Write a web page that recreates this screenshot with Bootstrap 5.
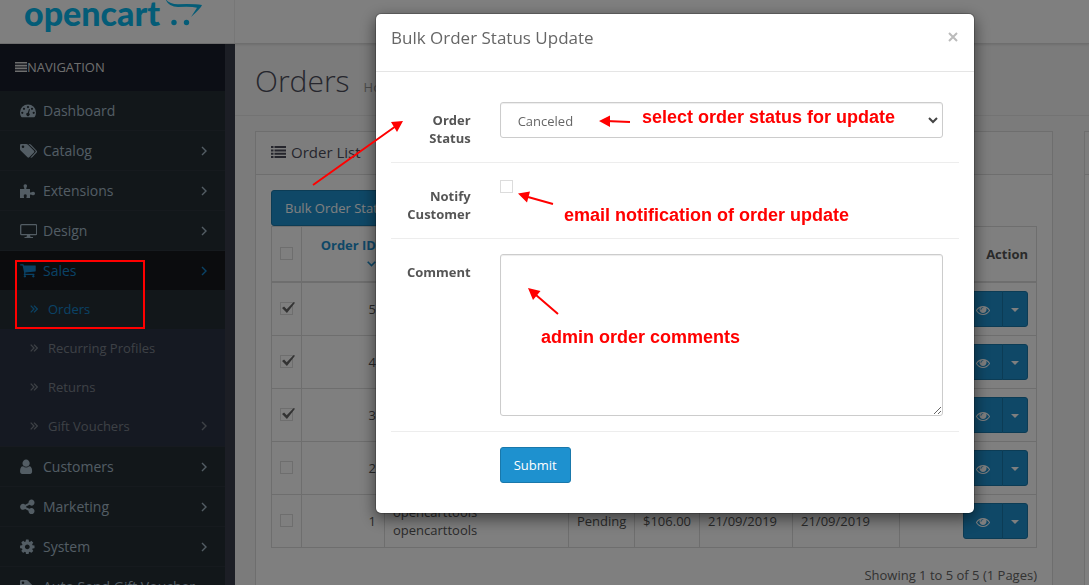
<!DOCTYPE html>
<html lang="en">
<head>
<meta charset="utf-8">
<meta name="viewport" content="width=device-width, initial-scale=1">
<title>Orders</title>
<link href="https://cdn.jsdelivr.net/npm/bootstrap@5.3.0/dist/css/bootstrap.min.css" rel="stylesheet">
<style>
  body { font: 13px/18px "Open Sans", sans-serif; color: #666; background: #f6f6f6; }
  .page { height: 100vh; overflow: hidden; }
  .topbar { height: 44px; border-bottom: 1px solid #dcdcdc; box-shadow: 0 1px 2px rgba(0,0,0,.1); z-index: 2; }
  .logo-box { width: 235px; border-right: 1px solid #eee; padding: 0 0 0 24px; }
  .logo-word { width: 136px; font: 900 34px/26px Lato, sans-serif; color: #08b9ee; }

  .sidebar { flex: 0 0 235px; background: #383d4a; }
  .side-inner { width: 225px; background: #252f35; }
  .side-title { height: 47px; background: #191d2b; color: #ddd; padding: 0 15px 2px; font-size: 13px; }
  .side-link { height: 40px; padding: 0 17px 0 20px; gap: 6px; font-size: 14px; color: #a6bac9; border-bottom: 1px solid #2c343c; text-decoration: none; }
  .side-link svg { width: 17px; height: 16px; flex: none; }
  .side-link.current { height: 39px; background: #16181d; color: #1485ca; border: 0; }
  .side-sub { background: #2b3344; border-bottom: 1px solid #2f3541; }
  .side-sub a { height: 39px; padding: 0 17px 2px 30px; gap: 10px; color: #7b828d; text-decoration: none; }
  .side-sub a.current { background: #252f35; color: #1485ca; }
  .side-sub svg, .side-link .angle, .side-sub .angle { width: 8px; height: 10px; flex: none; }
  .side-mark { left: 15px; top: 260px; width: 130px; height: 69px; border: 2px solid #f00; z-index: 1060; }

  .page-head { height: 72px; padding: 17px 20px 0; gap: 14px; border-bottom: 1px solid #e7e7e7; }
  .page-head h1 { font-size: 30px; line-height: 40px; font-weight: 300; color: #4c4d5a; margin: 0; }
  .crumb { padding-top: 17px; color: #999; text-decoration: none; }
  .panels { padding: 15px 0 0 20px; gap: 31px; }
  .panel { border: 1px solid #dcdcdc; background: #fff; }
  .panel-top { height: 43px; padding: 0 15px 2px; gap: 5px; font-size: 15px; color: #4c4d5a; background: #fafafa; border-bottom: 1px solid #dcdcdc; }
  .panel-main { padding: 15px; }
  .side-panel { flex: 0 0 245px; margin-right: -240px; }
  .btn-main { --bs-btn-bg: #1e91cf; --bs-btn-color: #fff; --bs-btn-border-color: #1978ab; --bs-btn-hover-bg: #1978ab; --bs-btn-hover-color: #fff;
    --bs-btn-font-size: 13px; --bs-btn-line-height: 18px; --bs-btn-padding-y: 8px; --bs-btn-padding-x: 13px; --bs-btn-border-radius: 3px; height: 36px; }

  .orders { table-layout: fixed; margin: 0 0 18px; --bs-table-color: #555; border-color: #dcdcdc; }
  .orders > :not(caption) > * > * { padding: 8px; vertical-align: middle; border-width: 1px; }
  .orders thead th { height: 55px; border-bottom-width: 2px; color: #555; }
  .orders tbody td { height: 53px; }
  .orders th a { color: #1e91cf; text-decoration: none; }
  .w-tick { width: 30px; } .w-id { width: 83px; } .w-status { width: 66px; } .w-total { width: 65px; }
  .w-added { width: 93px; } .w-changed { width: 107px; } .w-action { width: 137px; }
  .btn-eye { --bs-btn-padding-x: 12px; } .btn-caret { --bs-btn-padding-x: 8px; }

  .tick { appearance: none; display: block; position: relative; width: 13px; height: 13px; margin: 0; border: 1px solid #dcdcdc; background: transparent; }
  .tick:checked::before { content: ""; position: absolute; left: 1px; top: -1px; width: 13px; height: 11px; background: #666;
    clip-path: polygon(0 55%, 16% 42%, 36% 66%, 90% 0, 100% 6%, 38% 100%); }

  .shade { z-index: 1050; opacity: .5; }
  .modal-dialog { max-width: 600px; margin: 13px 114px 0 auto; }
  .modal-content { border-radius: 6px; border: 1px solid rgba(0,0,0,.2); box-shadow: 0 5px 15px rgba(0,0,0,.5); background-clip: padding-box; color: #666; }
  .modal-header { padding: 14px 15px 24px; border-bottom: 1px solid #e5e5e5; }
  .modal-title { font-size: 17px; line-height: 19px; font-weight: 400; color: #666; }
  .btn-x { border: 0; background: none; padding: 0; width: 11px; height: 18px; color: #bbb; }
  .modal-body { padding: 15px; }
  .field { padding: 15px 0; margin: 0; }
  .field + .field { border-top: 1px solid #ededed; }
  .field > * { padding: 0 16px 0 14px; }
  .field label { padding-top: 9px; padding-right: 15px; font-weight: 700; color: #555; text-align: right; }
  .field .form-control, .field .form-select { font-size: 13px; line-height: 18px; border: 1px solid #ccc; border-radius: 3px; color: #666; box-shadow: inset 0 1px 1px rgba(0,0,0,.075); }
  .field .form-select { height: 36px; padding: 9px 30px 7px 17px; background-size: 10px 8px; background-position: right 4px center;
    background-image: url("data:image/svg+xml,%3Csvg xmlns='http://www.w3.org/2000/svg' viewBox='0 0 10 8'%3E%3Cpath d='M1 2l4 4 4-4' fill='none' stroke='%23444' stroke-width='2'/%3E%3C/svg%3E"); }
  .field textarea { height: 162px; }
  .tick-form { margin-top: 2px; }
  .note { position: absolute; font: 700 18px/20px "Liberation Sans", sans-serif; color: #f00; white-space: nowrap; pointer-events: none; }
  .note-status { left: 266px; top: 93px; } .note-notify { left: 188px; top: 191px; } .note-comment { left: 165px; top: 313px; }
  .arrows { position: absolute; left: 0; top: 0; width: 300px; height: 320px; overflow: visible; pointer-events: none; }
</style>
</head>
<body>
<svg class="d-none" aria-hidden="true">
  <symbol id="angle" viewBox="0 0 8 10"><path d="M2 1l4 4-4 4" fill="none" stroke="currentColor" stroke-width="1.4"/></symbol>
  <symbol id="angles" viewBox="0 0 8 10"><path d="M.7 1.700L4 5 .7 8.300M4 1.700L7.300 5 4 8.300" fill="none" stroke="currentColor" stroke-width="1.2"/></symbol>
  <symbol id="eye" viewBox="0 0 1792 1792"><path d="M1664 960q-152-236-381-353 61 104 61 225 0 185-131.500 316.500t-316.500 131.500-316.500-131.500-131.500-316.500q0-121 61-225-229 117-381 353 133 205 333.500 326.500t434.500 121.500 434.500-121.500 333.500-326.500zm-720-384q0-20-14-34t-34-14q-125 0-214.500 89.500t-89.500 214.500q0 20 14 34t34 14 34-14 14-34q0-86 61-147t147-61q20 0 34-14t14-34zm848 384q0 34-20 69-140 230-376.500 368.500t-499.500 138.500-499.500-139-376.500-368q-20-35-20-69t20-69q140-229 376.500-368t499.500-139 499.500 139 376.500 368q20 35 20 69z" fill="currentColor"/></symbol>
  <symbol id="caret" viewBox="0 0 8 4"><path d="M0 0h8L4 4z" fill="currentColor"/></symbol>
  <symbol id="tag" viewBox="0 0 17 16"><path fill-rule="evenodd" d="M0 2.200Q0 1 1.200 1h5q1 0 1.800.8l6 6q.8.900 0 1.700l-4.800 4.800q-.9.800-1.700 0l-6.600-6.500Q0 7 0 6zM3 2.500a1.300 1.300 0 100 2.600 1.300 1.300 0 000-2.600z" fill="currentColor"/></symbol>
</svg>

<div class="page d-flex flex-column position-relative">
  <header class="topbar bg-white d-flex flex-shrink-0 position-relative">
    <a class="logo-box d-flex text-decoration-none" href="#">
      <span class="logo-word">opencart</span>
      <svg width="40" height="28" viewBox="0 0 40 28" class="ms-1 flex-shrink-0" aria-hidden="true"><path d="M1-2Q4 4 14 4.200 30 3.600 38 5 37 8 27 17L33 7.800Q27 6 14 7 4 7 1-2z" fill="#08b9ee"/><circle cx="10" cy="22.500" r="2.700" fill="#08b9ee"/><circle cx="22.500" cy="22.500" r="2.700" fill="#08b9ee"/></svg>
    </a>
  </header>

  <div class="d-flex flex-grow-1 overflow-hidden">
    <nav class="sidebar" aria-label="Navigation">
      <div class="side-inner">
        <div class="side-title d-flex align-items-center">
          <svg width="12" height="10" viewBox="0 0 12 10" aria-hidden="true"><path d="M0 .8h12M0 3.600h12M0 6.400h12M0 9.200h12" stroke="currentColor" stroke-width="1.600"/></svg><span>NAVIGATION</span>
        </div>
        <a class="side-link d-flex align-items-center" href="#"><svg viewBox="0 0 17 16"><path fill-rule="evenodd" d="M8 1.500a8 8 0 018 8q0 2.500-1.200 4.300-.2.400-.7.400H1.900q-.5 0-.7-.4Q0 12 0 9.500a8 8 0 018-8zM8 3a1.100 1.100 0 100 2.200A1.100 1.100 0 008 3zM4 4.700a1.100 1.100 0 100 2.200 1.100 1.100 0 000-2.200zm8 0a1.100 1.100 0 100 2.200 1.100 1.100 0 000-2.200zM2.300 8.700a1.100 1.100 0 100 2.200 1.100 1.100 0 000-2.200zm11.400 0a1.100 1.100 0 100 2.200 1.100 1.100 0 000-2.200zM9 6l-1.200 3.700a1.700 1.700 0 101.200.3L10 6.300z" fill="currentColor"/></svg><span>Dashboard</span></a>
        <a class="side-link d-flex align-items-center" href="#"><svg viewBox="0 0 17 16"><use href="#tag"/><path d="M8.500 1h.8q1 0 1.700.8l5.700 6q.8.900 0 1.700l-4.500 4.700q-.8.800-1.700.3l5-5.500q.5-.6 0-1.200z" fill="currentColor"/></svg><span>Catalog</span><svg class="angle ms-auto"><use href="#angle"/></svg></a>
        <a class="side-link d-flex align-items-center" href="#"><svg viewBox="0 0 17 16"><path d="M0 6h4.300Q4.500 5 3.800 4 3 1.500 5.300 1.300 7.600 1.500 6.800 4 6 5 6.300 6H10v3.200q1.200.5 2-.2Q15 8.200 15 10.500t-3 1.500q-.8-.7-2-.2V15H6.500q-.3-1 .3-1.800.3-1.900-1.500-2-1.900.1-1.600 2Q4.300 14 4 15H0z" fill="currentColor"/></svg><span>Extensions</span><svg class="angle ms-auto"><use href="#angle"/></svg></a>
        <a class="side-link d-flex align-items-center" href="#"><svg viewBox="0 0 17 16"><rect x=".7" y="1.700" width="16" height="10" rx="1" fill="none" stroke="currentColor" stroke-width="1.300"/><path d="M7 12h3l.5 2H13v1H4.500v-1h2z" fill="currentColor"/></svg><span>Design</span><svg class="angle ms-auto"><use href="#angle"/></svg></a>
        <a class="side-link current d-flex align-items-center" href="#"><svg viewBox="64 128 1792 1700"><path d="M704 1536q0 52-38 90t-90 38-90-38-38-90 38-90 90-38 90 38 38 90zm896 0q0 52-38 90t-90 38-90-38-38-90 38-90 90-38 90 38 38 90zm128-1088v512q0 24-16.500 42.500t-40.500 21.500l-1044 122q13 60 13 70 0 16-24 64h920q26 0 45 19t19 45-19 45-45 19h-1024q-26 0-45-19t-19-45q0-11 8-31.500t16-36 21.500-40 15.500-29.500l-177-823h-204q-26 0-45-19t-19-45 19-45 45-19h256q16 0 28.500 6.500t19.500 15.500 13 24.500 8 26 5.500 29.500 4.500 26h1201q26 0 45 19t19 45z" fill="currentColor"/></svg><span>Sales</span><svg class="angle ms-auto"><use href="#angle"/></svg></a>
        <div class="side-sub">
          <a class="current d-flex align-items-center" href="#"><svg><use href="#angles"/></svg><span>Orders</span></a>
          <a class="d-flex align-items-center" href="#"><svg><use href="#angles"/></svg><span>Recurring Profiles</span></a>
          <a class="d-flex align-items-center" href="#"><svg><use href="#angles"/></svg><span>Returns</span></a>
          <a class="d-flex align-items-center" href="#"><svg><use href="#angles"/></svg><span>Gift Vouchers</span><svg class="angle ms-auto"><use href="#angle"/></svg></a>
        </div>
        <a class="side-link d-flex align-items-center" href="#"><svg viewBox="256 64 1792 1700"><path d="M1536 1399q0 109-62.500 187t-150.500 78h-854q-88 0-150.500-78t-62.500-187q0-85 8.500-160.500t31.500-152 58.500-131 94-89 134.500-34.500q131 128 313 128t313-128q76 0 134.500 34.500t94 89 58.500 131 31.500 152 8.500 160.500zm-256-887q0 159-112.500 271.500t-271.500 112.500-271.500-112.500-112.500-271.500 112.500-271.500 271.500-112.500 271.500 112.500 112.500 271.500z" fill="currentColor"/></svg><span>Customers</span><svg class="angle ms-auto"><use href="#angle"/></svg></a>
        <a class="side-link d-flex align-items-center" href="#"><svg viewBox="128 64 1792 1700"><path d="M1344 1024q133 0 226.500 93.500t93.500 226.500-93.500 226.500-226.500 93.500-226.500-93.500-93.500-226.500q0-12 2-34l-360-180q-92 86-218 86-133 0-226.500-93.500t-93.500-226.500 93.500-226.500 226.500-93.500q126 0 218 86l360-180q-2-22-2-34 0-133 93.500-226.500t226.500-93.500 226.500 93.500 93.500 226.500-93.500 226.500-226.500 93.500q-126 0-218-86l-360 180q2 22 2 34t-2 34l360 180q92-86 218-86z" fill="currentColor"/></svg><span>Marketing</span><svg class="angle ms-auto"><use href="#angle"/></svg></a>
        <a class="side-link d-flex align-items-center" href="#"><svg viewBox="128 64 1792 1700"><path d="M1152 896q0-106-75-181t-181-75-181 75-75 181 75 181 181 75 181-75 75-181zm512-109v222q0 12-8 23t-20 13l-185 28q-19 54-39 91 35 50 107 138 10 12 10 25t-9 23q-27 37-99 108t-94 71q-12 0-26-9l-138-108q-44 23-91 38-16 136-29 186-7 28-36 28h-222q-14 0-24.500-8.500t-11.500-21.500l-28-184q-49-16-90-37l-141 107q-10 9-25 9-14 0-25-11-126-114-165-168-7-10-7-23 0-12 8-23 15-21 51-66.500t54-70.500q-27-50-41-99l-183-27q-13-2-21-12.500t-8-23.500v-222q0-12 8-23t19-13l186-28q14-46 39-92-40-57-107-138-10-12-10-24 0-10 9-23 26-36 98.500-107.500t94.500-71.500q13 0 26 10l138 107q44-23 91-38 16-136 29-186 7-28 36-28h222q14 0 24.500 8.500t11.500 21.500l28 184q49 16 90 37l142-107q9-9 24-9 13 0 25 10 129 119 165 170 7 8 7 22 0 12-8 23-15 21-51 66.500t-54 70.500q26 50 41 98l183 28q13 2 21 12.500t8 23.500z" fill="currentColor"/></svg><span>System</span><svg class="angle ms-auto"><use href="#angle"/></svg></a>
        <a class="side-link d-flex align-items-center" href="#"><svg viewBox="0 0 17 16"><use href="#tag"/></svg><span class="text-nowrap">Auto Send Gift Voucher</span></a>
      </div>
    </nav>

    <main class="flex-grow-1 overflow-hidden">
      <div class="page-head d-flex">
        <h1>Orders</h1>
        <a class="crumb" href="#">Home</a>
      </div>
      <div class="panels d-flex">
        <section class="panel flex-grow-1">
          <div class="panel-top d-flex align-items-center">
            <svg width="15" height="12" viewBox="0 0 15 12" aria-hidden="true"><path d="M0 1h2.500M3.500 1H15M0 4.400h2.500M3.500 4.400H15M0 7.700h2.500M3.500 7.700H15M0 11h2.500M3.500 11H15" stroke="currentColor" stroke-width="2"/></svg>
            <span>Order List</span>
          </div>
          <div class="panel-main">
            <button type="button" class="btn btn-main d-block" data-bs-target="#bulk">Bulk Order Status Update</button>
            <table class="table table-bordered orders">
              <colgroup><col class="w-tick"><col class="w-id"><col><col class="w-status"><col class="w-total"><col class="w-added"><col class="w-changed"><col class="w-action"></colgroup>
              <thead><tr>
                <th><input class="tick" type="checkbox" aria-label="Select all"></th>
                <th class="text-end"><a href="#" class="d-block">Order ID<br><svg width="9" height="6" viewBox="0 0 9 6"><path d="M.7.7l3.800 3.800L8.300.7" fill="none" stroke="currentColor" stroke-width="1.600"/></svg></a></th>
                <th>Customer</th><th>Status</th><th class="text-end">Total</th><th>Date Added</th><th>Date Modified</th><th class="text-end">Action</th>
              </tr></thead>
              <tbody id="rows"></tbody>
            </table>
            <div class="text-end">Showing 1 to 5 of 5 (1 Pages)</div>
            <div class="p-4"></div>
          </div>
        </section>
        <aside class="panel side-panel" aria-label="Filter"><div class="panel-top"></div></aside>
      </div>
    </main>
  </div>
</div>

<div class="modal-backdrop shade"></div>
<div class="side-mark position-absolute"></div>

<div class="modal d-block overflow-hidden" id="bulk" tabindex="-1" aria-labelledby="bulk-title">
  <div class="modal-dialog">
    <div class="modal-content">
      <div class="modal-header align-items-start">
        <h4 class="modal-title" id="bulk-title">Bulk Order Status Update</h4>
        <button type="button" class="btn-x d-flex align-items-center" aria-label="Close"><svg width="10" height="10" viewBox="0 0 10 10"><path d="M1 1l8 8M9 1L1 9" stroke="currentColor" stroke-width="2"/></svg></button>
      </div>
      <form class="modal-body">
        <div class="row field">
          <label class="col-2" for="status">Order Status</label>
          <div class="col-10"><select class="form-select" id="status"><option>Canceled</option></select></div>
        </div>
        <div class="row field">
          <label class="col-2" for="notify">Notify Customer</label>
          <div class="col-10"><input class="tick tick-form" type="checkbox" id="notify"></div>
        </div>
        <div class="row field">
          <label class="col-2" for="comment">Comment</label>
          <div class="col-10"><textarea class="form-control" id="comment"></textarea></div>
        </div>
        <div class="row field">
          <div class="col-10 offset-2"><button type="button" class="btn btn-main">Submit</button></div>
        </div>
      </form>
      <span class="note note-status">select order status for update</span>
      <span class="note note-notify">email notification of order update</span>
      <span class="note note-comment">admin order comments</span>
      <svg class="arrows" viewBox="0 0 300 320" aria-hidden="true">
        <g stroke="#f00" stroke-width="2" fill="none"><path d="M-63 171L20 112M254 108L230 107M177 190L152 183M182 300L160 281"/></g>
        <g fill="#f00"><path d="M27 107L21 118 15 108zM223 107L234 101.500V113zM142 179.500L154 177.500 151 188.500zM152 274L164.500 277 157 286z"/></g>
      </svg>
    </div>
  </div>
</div>

<script src="https://cdn.jsdelivr.net/npm/bootstrap@5.3.0/dist/js/bootstrap.bundle.min.js"></script>
<script>
  // Orders, newest first; the three newest are ticked for the bulk update.
  document.getElementById('rows').innerHTML = [5, 4, 3, 2, 1].map(id => `
    <tr>
      <td><input class="tick" type="checkbox" aria-label="Select order ${id}" ${id > 2 ? 'checked' : ''}></td>
      <td class="text-end">${id}</td><td>opencarttools<br>opencarttools</td><td>Pending</td><td class="text-end">$106.00</td>
      <td>21/09/2019</td><td>21/09/2019</td>
      <td class="text-end"><div class="btn-group">
        <button type="button" class="btn btn-main btn-eye" aria-label="View"><svg width="14" height="14"><use href="#eye"/></svg></button>
        <button type="button" class="btn btn-main btn-caret" aria-label="More"><svg width="8" height="4"><use href="#caret"/></svg></button>
      </div></td>
    </tr>`).join('');
</script>
</body>
</html>
